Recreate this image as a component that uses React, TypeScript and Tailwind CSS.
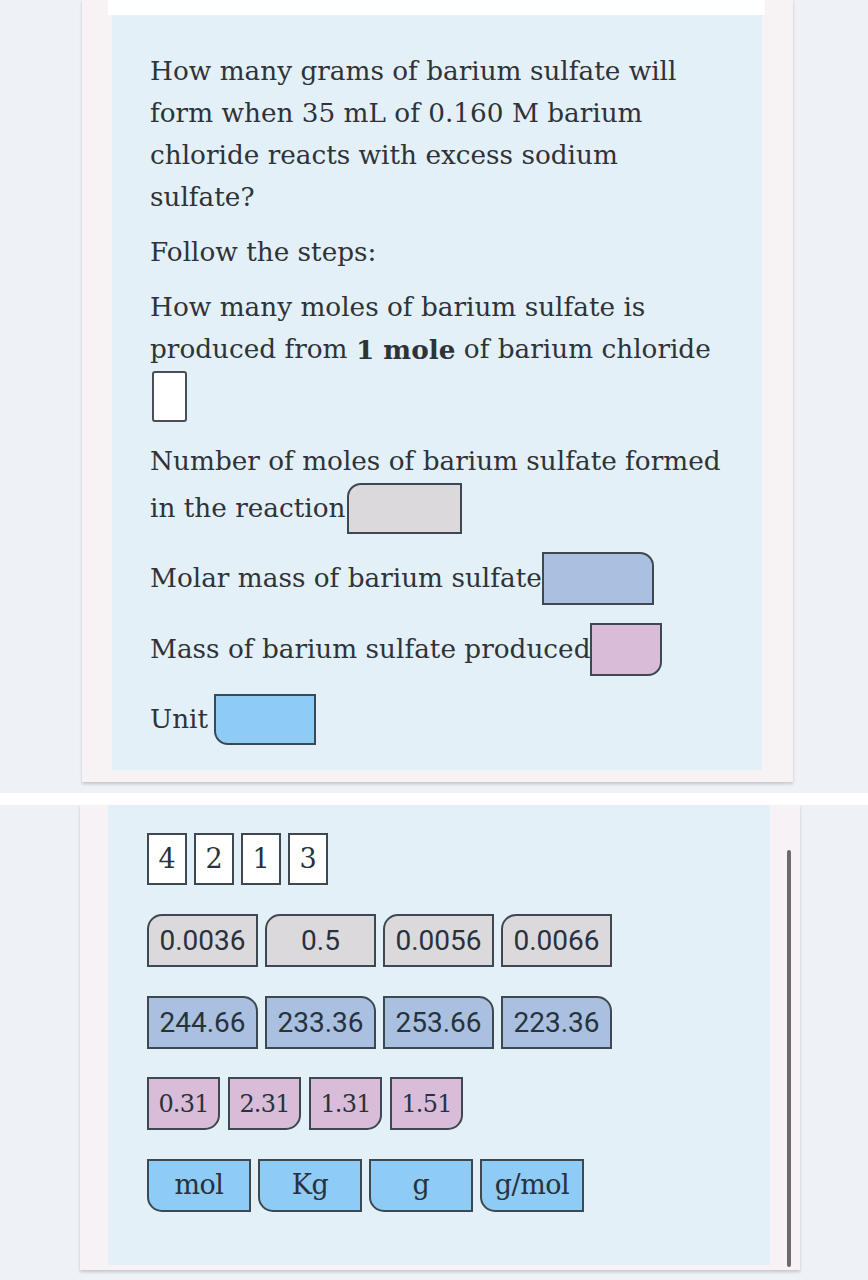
import React from "react";

const serif = "font-['DejaVu_Serif',serif]";
const sans = "font-['Roboto','Liberation_Sans',sans-serif]";
const edge = "border-2 border-[#3e4851] text-[#27323c]";

function Line({ children }: { children: React.ReactNode }) {
  return <div className="h-[42px] flex items-center whitespace-nowrap">{children}</div>;
}

function Tile({ label, className }: { label: string; className: string }) {
  return (
    <div className={`h-[53px] flex items-center justify-center ${edge} ${className}`}>
      {label}
    </div>
  );
}

export default function App() {
  const gray = ["0.0036", "0.5", "0.0056", "0.0066"];
  const blue = ["244.66", "233.36", "253.66", "223.36"];
  const pink = ["0.31", "2.31", "1.31", "1.51"];
  const units = ["mol", "Kg", "g", "g/mol"];

  return (
    <div className="w-[868px] min-h-[1280px] bg-[#eef1f6] overflow-hidden">
      {/* question card */}
      <div className="ml-[82px] w-[711px] h-[782px] bg-[#f7f3f5] shadow-[0_2px_3px_rgba(0,0,0,0.18)]">
        <div className="ml-[26px] w-[657px] h-[15px] bg-white" />
        <div
          className={`ml-[30px] w-[650px] h-[755px] bg-[#e3f0f7] pl-[38px] pt-[36px] text-[26.3px] text-[#2f3337] ${serif}`}
        >
          <Line>How many grams of barium sulfate will</Line>
          <Line>form when 35 mL of 0.160 M barium</Line>
          <Line>chloride reacts with excess sodium</Line>
          <Line>sulfate?</Line>
          <div className="mt-[13px]">
            <Line>Follow the steps:</Line>
          </div>
          <div className="mt-[13px]">
            <Line>How many moles of barium sulfate is</Line>
            <Line>
              produced from&nbsp;<b>1 mole</b>&nbsp;of barium chloride
            </Line>
          </div>
          <div className="ml-[2px] w-[35px] h-[51px] bg-white border-2 border-[#4a4f55] rounded-[3px]" />
          <div className="mt-[19px]">
            <Line>Number of moles of barium sulfate formed</Line>
          </div>
          <div className="flex items-center gap-[2px] h-[51px]">
            <span>in the reaction</span>
            <div className={`w-[115px] h-[51px] bg-[#dcd9dc] rounded-tl-[14px] ${edge}`} />
          </div>
          <div className="mt-[18px] flex items-center h-[53px]">
            <span>Molar mass of barium sulfate</span>
            <div className={`w-[112px] h-[53px] bg-[#aac0e0] rounded-tr-[14px] ${edge}`} />
          </div>
          <div className="mt-[18px] flex items-center h-[53px]">
            <span>Mass of barium sulfate produced</span>
            <div className={`w-[72px] h-[53px] bg-[#d9bdd8] rounded-br-[14px] ${edge}`} />
          </div>
          <div className="mt-[18px] flex items-center gap-[6px] h-[51px]">
            <span>Unit</span>
            <div className={`w-[102px] h-[51px] bg-[#8ecbf5] rounded-bl-[14px] ${edge}`} />
          </div>
        </div>
      </div>

      <div className="h-[11px]" />
      <div className="h-[12px] bg-white" />

      {/* answer bank */}
      <div className="relative ml-[80px] w-[720px] h-[465px] bg-[#f6f2f5] shadow-[0_2px_3px_rgba(0,0,0,0.18)]">
        <div className="ml-[28px] w-[662px] h-[460px] bg-[#e3f0f7] pl-[39px] pt-[28px]">
          <div className={`flex gap-[7px] text-[27px] ${serif}`}>
            {["4", "2", "1", "3"].map((n) => (
              <div
                key={n}
                className={`w-[40px] h-[52px] bg-white flex items-center justify-center ${edge}`}
              >
                {n}
              </div>
            ))}
          </div>
          <div className={`mt-[29px] flex gap-[7px] text-[28px] ${sans}`}>
            {gray.map((v) => (
              <Tile key={v} label={v} className="w-[111px] bg-[#dcd9dc] rounded-tl-[15px]" />
            ))}
          </div>
          <div className={`mt-[29px] flex gap-[7px] text-[28px] ${sans}`}>
            {blue.map((v) => (
              <Tile key={v} label={v} className="w-[111px] bg-[#aac0e0] rounded-tr-[15px]" />
            ))}
          </div>
          <div className={`mt-[28px] flex gap-[8px] text-[24px] tracking-[-0.8px] ${serif}`}>
            {pink.map((v) => (
              <Tile key={v} label={v} className="w-[73px] bg-[#d9bdd8] rounded-br-[15px]" />
            ))}
          </div>
          <div className={`mt-[29px] flex gap-[7px] text-[27px] tracking-[-0.5px] ${serif}`}>
            {units.map((v) => (
              <Tile key={v} label={v} className="w-[104px] bg-[#8ecbf5] rounded-bl-[15px]" />
            ))}
          </div>
        </div>
        {/* scrollbar */}
        <div className="absolute left-[707px] top-[45px] w-[4px] h-[417px] bg-[#6b6b6b] rounded-full" />
      </div>
    </div>
  );
}
